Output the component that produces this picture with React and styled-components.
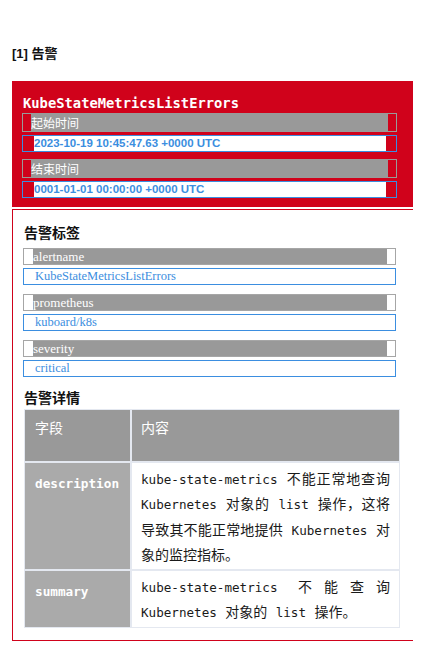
import React from 'react';
import styled, { createGlobalStyle } from 'styled-components';

const RED = '#d0021b';
const BLUE = '#3b8ee0';

const GlobalStyle = createGlobalStyle`
  body {
    margin: 0;
    background: #fff;
  }
`;

const Page = styled.div`
  width: 401px;
  padding: 45px 0 0 12px;
  font-family: "Liberation Sans", "Noto Sans CJK SC", sans-serif;
`;

const Heading = styled.h3`
  margin: 0 0 18px;
  font-size: 13px;
  line-height: 18px;
  font-weight: bold;
  color: #111;
`;

const AlertCard = styled.div`
  background: ${RED};
  padding: 14px 16px 9px 10px;
  display: flex;
  flex-direction: column;
`;

const AlertName = styled.div`
  margin: 0 0 2px 1px;
  font-family: "DejaVu Sans Mono", monospace;
  font-weight: bold;
  font-size: 13.8px;
  line-height: 16px;
  color: #fff;
`;

const Fields = styled.div`
  display: flex;
  flex-direction: column;
  gap: ${(p) => p.$gap}px;
  width: ${(p) => p.$width}px;
`;

const Pair = styled.div`
  display: flex;
  flex-direction: column;
  gap: 3px;
`;

const LabelBar = styled.div`
  box-sizing: border-box;
  height: ${(p) => (p.$light ? 17 : 19)}px;
  border: 1px solid ${(p) => (p.$light ? '#a6a6a6' : '#9a9a9a')};
  padding: ${(p) => (p.$light ? '0 8px 0 9px' : '0 8px')};
  display: flex;
`;

const LabelFill = styled.div`
  flex: 1;
  display: flex;
  align-items: center;
  background: #999;
  color: #fff;
  font-family: ${(p) =>
    p.$light ? '"Liberation Serif", serif' : '"Noto Sans CJK SC", sans-serif'};
  font-size: ${(p) => (p.$light ? 13 : 12)}px;
  line-height: 15px;
  white-space: nowrap;
`;

const ValueBox = styled.div`
  box-sizing: border-box;
  height: 17px;
  border: 1px solid ${BLUE};
  padding: 0 10px 0 11px;
  display: flex;
`;

const ValueFill = styled.div`
  flex: 1;
  display: flex;
  align-items: center;
  background: #fff;
  color: ${BLUE};
  font-family: ${(p) =>
    p.$light ? '"Liberation Serif", serif' : '"Liberation Sans", sans-serif'};
  font-weight: ${(p) => (p.$light ? 'normal' : 'bold')};
  font-size: ${(p) => (p.$light ? 12.5 : 11.5)}px;
  line-height: 15px;
  white-space: nowrap;
`;

const DetailCard = styled.div`
  margin-top: 2px;
  border: 1px solid ${RED};
  border-right: none;
  padding: 12px 0 12px 10px;
`;

const SectionTitle = styled.div`
  margin: ${(p) => p.$margin};
  font-family: "Noto Sans CJK SC", sans-serif;
  font-size: 14px;
  line-height: 20px;
  font-weight: bold;
  color: #111;
`;

const Table = styled.table`
  width: 376px;
  margin-left: 1px;
  border-collapse: separate;
  border-spacing: 0;
  table-layout: fixed;
`;

const Th = styled.th`
  padding: 5px 10px 21px ${(p) => p.$padL}px;
  border: 1px solid #e4e8f0;
  background: #999;
  color: #fff;
  text-align: left;
  vertical-align: top;
  font-family: "Noto Sans CJK SC", sans-serif;
  font-weight: normal;
  font-size: 14px;
  line-height: 25px;
`;

const KeyCell = styled.td`
  padding: 8px 10px;
  border: 1px solid #e4e8f0;
  background: #aaa;
  vertical-align: top;
  color: #fff;
  font-family: "DejaVu Sans Mono", monospace;
  font-weight: bold;
  font-size: 12.7px;
  line-height: 25.3px;
`;

const TextCell = styled.td`
  padding: 4px 9px 1px 9px;
  border: 1px solid #e4e8f0;
  background: #fff;
  vertical-align: top;
  color: #1a1a1a;
  text-align: justify;
  font-family: "DejaVu Sans Mono", "Noto Sans CJK SC", monospace;
  font-size: 14px;
  line-height: 25.3px;
`;

const Code = styled.span`
  font-family: "DejaVu Sans Mono", monospace;
  font-size: 12.6px;
`;

const times = [
  { label: '起始时间', value: '2023-10-19 10:45:47.63 +0000 UTC' },
  { label: '结束时间', value: '0001-01-01 00:00:00 +0000 UTC' },
];

const labels = [
  { key: 'alertname', value: 'KubeStateMetricsListErrors' },
  { key: 'prometheus', value: 'kuboard/k8s' },
  { key: 'severity', value: 'critical' },
];

export default function App() {
  return (
    <>
      <GlobalStyle />
      <Page>
        <Heading>[1] 告警</Heading>

        <AlertCard>
          <AlertName>KubeStateMetricsListErrors</AlertName>
          <Fields $gap={7} $width={375}>
            {times.map((t) => (
              <Pair key={t.label}>
                <LabelBar>
                  <LabelFill>{t.label}</LabelFill>
                </LabelBar>
                <ValueBox>
                  <ValueFill>{t.value}</ValueFill>
                </ValueBox>
              </Pair>
            ))}
          </Fields>
        </AlertCard>

        <DetailCard>
          <SectionTitle $margin="0 0 6px 1px">告警标签</SectionTitle>
          <Fields $gap={9} $width={373}>
            {labels.map((l) => (
              <Pair key={l.key}>
                <LabelBar $light>
                  <LabelFill $light>{l.key}</LabelFill>
                </LabelBar>
                <ValueBox>
                  <ValueFill $light>{l.value}</ValueFill>
                </ValueBox>
              </Pair>
            ))}
          </Fields>

          <SectionTitle $margin="10px 0 2px 1px">告警详情</SectionTitle>
          <Table>
            <colgroup>
              <col style={{ width: 107 }} />
              <col style={{ width: 269 }} />
            </colgroup>
            <thead>
              <tr>
                <Th $padL={10}>字段</Th>
                <Th $padL={9}>内容</Th>
              </tr>
            </thead>
            <tbody>
              <tr>
                <KeyCell>description</KeyCell>
                <TextCell>
                  <Code>kube-state-metrics</Code> 不能正常地查询 <Code>Kubernetes</Code> 对象的{' '}
                  <Code>list</Code> 操作，这将导致其不能正常地提供 <Code>Kubernetes</Code>{' '}
                  对象的监控指标。
                </TextCell>
              </tr>
              <tr>
                <KeyCell>summary</KeyCell>
                <TextCell>
                  <Code>kube-state-metrics</Code> 不能查询 <Code>Kubernetes</Code> 对象的{' '}
                  <Code>list</Code> 操作。
                </TextCell>
              </tr>
            </tbody>
          </Table>
        </DetailCard>
      </Page>
    </>
  );
}
